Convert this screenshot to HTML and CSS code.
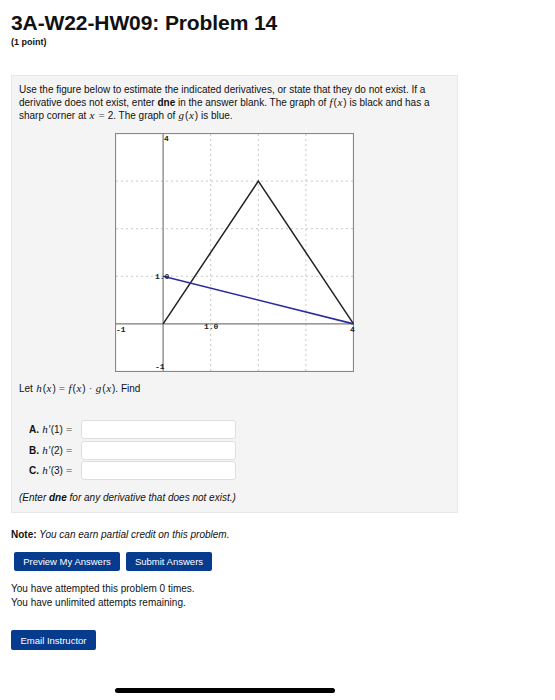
FILE: index.html
```html
<!DOCTYPE html>
<html>
<head>
<meta charset="utf-8">
<link rel="stylesheet" href="styles.css">
</head>
<body>
<div class="page">
  <h1 class="title">3A-W22-HW09: Problem 14</h1>
  <div class="points">(1 point)</div>

  <div class="problem">
    <p class="intro">Use the figure below to estimate the indicated derivatives, or state that they do not exist. If a derivative does not exist, enter <b>dne</b> in the answer blank. The graph of <span class="m">f</span>(<span class="m">x</span>) is black and has a sharp corner at <span class="m">x</span><span class="eq">=</span>2. The graph of <span class="m">g</span>(<span class="m">x</span>) is blue.</p>

    <div class="figure">
      <svg width="240" height="240" viewBox="0 0 240 240" xmlns="http://www.w3.org/2000/svg">
        <rect x="0" y="0" width="240" height="240" fill="#fff"/>
        <g stroke="#c8c8c8" stroke-width="1" stroke-dasharray="2,3">
          <line x1="95.7" y1="1" x2="95.7" y2="238"/>
          <line x1="143.3" y1="1" x2="143.3" y2="238"/>
          <line x1="190.9" y1="1" x2="190.9" y2="238"/>
          <line x1="1" y1="48.1" x2="238" y2="48.1"/>
          <line x1="1" y1="95.7" x2="238" y2="95.7"/>
          <line x1="1" y1="143.3" x2="238" y2="143.3"/>
        </g>
        <g stroke="#7a7a7a" stroke-width="1.2">
          <line x1="48.1" y1="0.5" x2="48.1" y2="238.5"/>
          <line x1="0.5" y1="190.9" x2="238.5" y2="190.9"/>
        </g>
        <rect x="0.5" y="0.5" width="238" height="238" fill="none" stroke="#888" stroke-width="1.2"/>
        <polyline points="48.1,190.9 143.3,48.1 238.5,190.9" fill="none" stroke="#222" stroke-width="1.5"/>
        <line x1="48.1" y1="143.3" x2="238.5" y2="190.9" stroke="#2b2b9e" stroke-width="1.6"/>
        <g font-family="'Liberation Mono', monospace" font-weight="bold" font-size="8" fill="#222">
          <text x="49" y="8">4</text>
          <text x="40" y="146">1.0</text>
          <text x="89" y="196">1.0</text>
          <text x="1" y="199">-1</text>
          <text x="235" y="199">4</text>
          <text x="40" y="236">-1</text>
        </g>
      </svg>
    </div>

    <p class="let">Let <span class="m">h</span>(<span class="m">x</span>)<span class="eq">=</span><span class="m">f</span>(<span class="m">x</span>)<span class="eq">·</span><span class="m">g</span>(<span class="m">x</span>). Find</p>

    <div class="answers">
      <div class="row"><span class="lab"><b>A.</b> <span class="m">h</span>′(1)<span class="eq">=</span></span><span class="inp"></span></div>
      <div class="row"><span class="lab"><b>B.</b> <span class="m">h</span>′(2)<span class="eq">=</span></span><span class="inp"></span></div>
      <div class="row"><span class="lab"><b>C.</b> <span class="m">h</span>′(3)<span class="eq">=</span></span><span class="inp"></span></div>
    </div>

    <p class="hint">(Enter <b>dne</b> for any derivative that does not exist.)</p>
  </div>

  <p class="note"><b>Note:</b> <i>You can earn partial credit on this problem.</i></p>

  <div class="buttons">
    <span class="btn btn-preview">Preview My Answers</span>
    <span class="btn btn-submit">Submit Answers</span>
  </div>

  <p class="attempts">You have attempted this problem 0 times.<br>You have unlimited attempts remaining.</p>

  <span class="btn btn-email">Email Instructor</span>
</div>
<div class="home-bar"></div>
</body>
</html>
```

FILE: styles.css
```css
html, body {
  margin: 0;
  padding: 0;
  background: #fff;
}
body {
  font-family: "Liberation Sans", Arial, sans-serif;
  color: #111;
  width: 555px;
  height: 700px;
  position: relative;
  overflow: hidden;
}
.page {
  padding: 12px 0 0 11px;
}
.title {
  font-size: 21px;
  font-weight: bold;
  margin: 0;
  line-height: 22px;
  letter-spacing: -0.1px;
}
.points {
  font-size: 9px;
  font-weight: bold;
  margin-top: 3px;
  line-height: 11px;
}
.problem {
  margin-top: 27px;
  width: 432px;
  background: #f4f4f4;
  border: 1px solid #e8e8e8;
  padding: 7px 6px 8px 7px;
  font-size: 10px;
  line-height: 13px;
}
.problem p {
  margin: 0;
}
.m {
  font-family: "Liberation Serif", "Times New Roman", serif;
  font-style: italic;
  font-size: 11px;
  padding: 0 1px 0 0.5px;
}
.eq {
  font-family: "Liberation Serif", "Times New Roman", serif;
  font-size: 11px;
  color: #444;
  padding: 0 3px;
}
.figure {
  display: flex;
  justify-content: center;
  margin-top: 11px;
}
.figure svg {
  display: block;
}
.problem .let {
  margin-top: 9px;
}
.answers {
  margin-top: 25px;
  padding-left: 10px;
  display: flex;
  flex-direction: column;
  gap: 1.5px;
}
.row {
  display: flex;
  align-items: center;
  height: 19px;
}
.lab {
  width: 52px;
  white-space: nowrap;
}
.inp {
  width: 153px;
  height: 17px;
  background: #fff;
  border: 1px solid #dedede;
  border-radius: 3px;
}
.problem .hint {
  margin-top: 11px;
  font-style: italic;
}
.note {
  margin: 15px 0 0 0;
  font-size: 10px;
  line-height: 13px;
}
.buttons {
  display: flex;
  gap: 6px;
  margin-top: 11px;
  padding-left: 3px;
}
.btn {
  display: inline-flex;
  align-items: center;
  justify-content: center;
  height: 19px;
  padding: 0 4px;
  background: #073b8e;
  color: #fff;
  font-size: 9.5px;
  border-radius: 2px;
  box-sizing: border-box;
  white-space: nowrap;
}
.btn-preview { width: 106px; }
.btn-submit { width: 86px; }
.attempts {
  margin: 11px 0 0 0;
  font-size: 10px;
  line-height: 14px;
}
.btn-email {
  margin-top: 20px;
  width: 85px;
  height: 20px;
}
.home-bar {
  position: absolute;
  left: 115px;
  top: 688px;
  width: 220px;
  height: 5px;
  border-radius: 3px;
  background: #000;
}
```
